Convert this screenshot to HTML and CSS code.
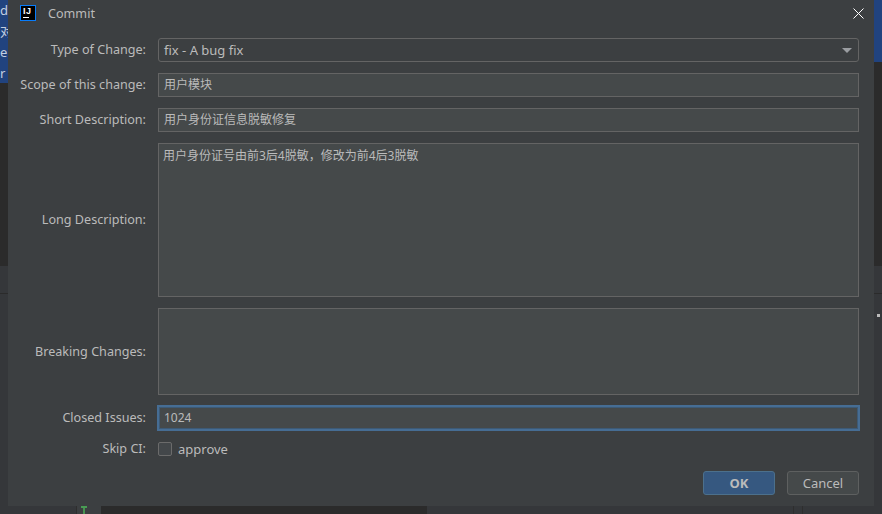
FILE: index.html
```html
<!DOCTYPE html>
<html lang="zh-CN">
<head>
    <meta charset="UTF-8">
    <title>Commit</title>
    <link rel="stylesheet" href="styles.css">
</head>
<body>
    <div class="ide">
        <div class="ide-side ide-left">
            <div class="banner banner-left">
                <div>d</div>
                <div>对</div>
                <div>e</div>
                <div>r</div>
            </div>
            <div class="ide-dark"></div>
            <div class="panel">
                <div class="panel-spacer"></div>
                <div class="panel-bottom">
                    <div class="gutter"><span class="run-mark"></span></div>
                    <div class="editor"></div>
                </div>
            </div>
        </div>
        <div class="ide-side ide-right">
            <div class="banner banner-right"></div>
            <div class="ide-dark"></div>
            <div class="panel">
                <div class="panel-spacer"><span class="panel-glyph"></span></div>
                <div class="panel-bottom panel-bottom-right"></div>
            </div>
        </div>
    </div>

    <div class="dialog">
        <div class="titlebar">
            <div class="app-icon">
                <span class="app-icon-text">IJ</span>
                <span class="app-icon-bar"></span>
            </div>
            <span class="title">Commit</span>
            <svg class="close" width="11" height="11" viewBox="0 0 11 11">
                <path d="M0.5 0.5L10.5 10.5M10.5 0.5L0.5 10.5" stroke="#ffffff" stroke-width="1" fill="none"/>
            </svg>
        </div>

        <form class="commit-form">
            <label class="field-label">Type of Change:</label>
            <div class="field select-field">
                <span>fix - A bug fix</span>
                <span class="select-arrow"></span>
            </div>

            <label class="field-label">Scope of this change:</label>
            <div class="field small">用户模块</div>

            <label class="field-label">Short Description:</label>
            <div class="field small">用户身份证信息脱敏修复</div>

            <label class="field-label">Long Description:</label>
            <div class="field small area">用户身份证号由前3后4脱敏，修改为前4后3脱敏</div>

            <label class="field-label">Breaking Changes:</label>
            <div class="field small area"></div>

            <label class="field-label">Closed Issues:</label>
            <div class="field small focused">1024</div>

            <label class="field-label">Skip CI:</label>
            <div class="check-row">
                <span class="checkbox"></span>
                <span>approve</span>
            </div>
        </form>

        <div class="buttons">
            <button type="button" class="btn btn-ok">OK</button>
            <button type="button" class="btn">Cancel</button>
        </div>
    </div>
</body>
</html>
```

FILE: styles.css
```css
html, body {
    margin: 0;
    padding: 0;
    width: 882px;
    height: 514px;
    overflow: hidden;
}

body {
    position: relative;
    font-family: "Noto Sans", "Noto Sans CJK SC", sans-serif;
    font-size: 13px;
    color: #bbbbbb;
    background-color: #2b2b2b;
}

/* IDE behind the dialog */
.ide {
    display: flex;
    height: 514px;
}

.ide-side {
    flex: 1;
    display: flex;
    flex-direction: column;
}

.banner {
    background-color: #21437f;
    color: #c4cfe0;
    overflow: hidden;
}

.banner-left {
    height: 83px;
    line-height: 21px;
    box-sizing: border-box;
}

.banner-right {
    height: 62px;
}

.ide-dark {
    flex: 1;
    background-color: #2b2b2b;
}

.panel {
    height: 248px;
    display: flex;
    flex-direction: column;
    background-color: #35373a;
}

.panel-spacer {
    flex: 1;
    position: relative;
}

.panel-glyph {
    position: absolute;
    right: 2px;
    top: 48px;
    width: 3px;
    height: 3px;
    background-color: #bbbbbb;
}

.panel-spacer::before {
    content: "";
    display: block;
    margin-top: 27px;
    border-top: 1px solid #2b2b2b;
}

.panel-bottom {
    height: 8px;
    display: flex;
}

.panel-bottom-right {
    border-left: 1px solid #2e2e2e;
    margin-left: 352px;
    width: 8px;
    border-right: 1px solid #2e2e2e;
}

.gutter {
    width: 101px;
    position: relative;
}

.gutter::before {
    content: "";
    position: absolute;
    left: 76px;
    top: 0;
    bottom: 0;
    width: 25px;
    box-sizing: border-box;
    border-left: 1px solid #2e2e2e;
    background-color: #3c3f41;
}

.run-mark {
    position: absolute;
    left: 81px;
    top: 0;
    width: 6px;
    height: 8px;
    background-color: #499c54;
    clip-path: polygon(0 0, 100% 0, 100% 25%, 65% 25%, 65% 100%, 35% 100%, 35% 25%, 0 25%);
}

.editor {
    width: 326px;
    background-color: #2b2b2b;
}

/* dialog */
.dialog {
    position: absolute;
    left: 8px;
    top: 0;
    width: 866px;
    height: 506px;
    display: flex;
    flex-direction: column;
    box-sizing: border-box;
    background-color: #3c3f41;
}

.titlebar {
    height: 26px;
    flex-shrink: 0;
    display: flex;
    align-items: center;
    padding-left: 12px;
    padding-right: 10px;
}

.app-icon {
    width: 16px;
    height: 16px;
    box-sizing: border-box;
    border: 1px solid #087cfa;
    background-color: #000000;
    position: relative;
    flex-shrink: 0;
}

.app-icon-text {
    display: block;
    color: #ffffff;
    font-family: "Liberation Sans", sans-serif;
    font-size: 9px;
    font-weight: bold;
    line-height: 10px;
    letter-spacing: 0.5px;
    padding-left: 2px;
}

.app-icon-bar {
    position: absolute;
    left: 2px;
    top: 11px;
    width: 6px;
    height: 1px;
    background-color: #ffffff;
}

.title {
    margin-left: 12px;
    flex: 1;
    font-size: 12.6px;
}

.close {
    display: block;
}

.commit-form {
    display: grid;
    grid-template-columns: 138px 701px;
    grid-template-rows: 24px 24px 24px 154px 87px 24px 16px;
    column-gap: 12px;
    row-gap: 11px;
    align-items: center;
    margin-top: 12px;
}

.field-label {
    text-align: right;
    font-size: 12.6px;
    padding-bottom: 1px;
}

.field {
    height: 24px;
    box-sizing: border-box;
    line-height: 22px;
    padding: 0 5px;
    background-color: #45494a;
    border: 1px solid #646464;
}

.small {
    font-size: 12px;
}

.select-field {
    display: flex;
    justify-content: space-between;
    align-items: center;
    background-color: #3c3f41;
    border-radius: 3px;
}

.select-arrow {
    width: 0;
    height: 0;
    margin-right: 1px;
    border-left: 5px solid transparent;
    border-right: 5px solid transparent;
    border-top: 5px solid #9a9da1;
}

.area {
    height: 100%;
    padding: 2px 4px;
    line-height: 20px;
}

.focused {
    outline: 1px solid #466d94;
    border: 1px solid #466d94;
    box-shadow: inset 0 0 0 1px #3d5a76;
}

.check-row {
    display: flex;
    align-items: center;
    gap: 6px;
}

.checkbox {
    width: 14px;
    height: 14px;
    box-sizing: border-box;
    border: 1px solid #6b6b6b;
    border-radius: 2px;
    background-color: #43474a;
}

.buttons {
    display: flex;
    justify-content: flex-end;
    gap: 12px;
    padding-right: 15px;
    margin-top: 14px;
}

.btn {
    width: 72px;
    height: 24px;
    padding: 0;
    box-sizing: border-box;
    font-family: "Noto Sans", sans-serif;
    font-size: 13px;
    color: #bbbbbb;
    background-color: #45494a;
    border: 1px solid #5e6060;
    border-radius: 3px;
}

.btn-ok {
    font-weight: bold;
    background-color: #365880;
    border-color: #4c708c;
}
```
